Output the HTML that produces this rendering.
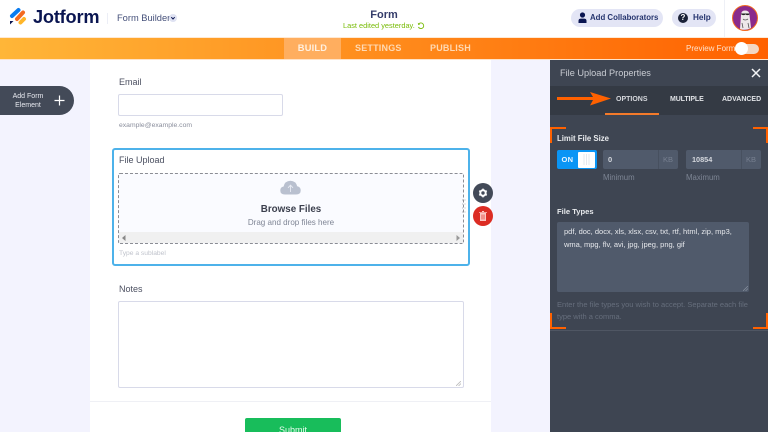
<!DOCTYPE html>
<html lang="en">
<head>
<meta charset="utf-8">
<title>Jotform Form Builder</title>
<style>
html,body{margin:0;padding:0;width:768px;height:432px;overflow:hidden;background:#f3f3fe;font-family:"Liberation Sans",sans-serif}
#r{position:relative;width:768px;height:432px;overflow:hidden;filter:blur(.35px)}
.a{position:absolute;white-space:nowrap;line-height:1}
.b{position:absolute;box-sizing:border-box}
svg{position:absolute;display:block}
</style>
</head>
<body>
<div id="r">
<!-- Header -->
<div class="b" style="left:0;top:0;width:768px;height:37px;background:#fff"></div>
<svg style="left:8px;top:7px" width="20" height="20" viewBox="0 0 20 20">
<path d="M4 9 L10.500 3" stroke="#0a7cf0" stroke-width="4" stroke-linecap="round"/>
<path d="M9 12 L15 5.500" stroke="#f36a21" stroke-width="4" stroke-linecap="round"/>
<path d="M12.500 15.500 L16 12" stroke="#ffb629" stroke-width="4" stroke-linecap="round"/>
<path d="M2 14 h3.500 l-3.500 3.500z" fill="#0a1551"/>
</svg>
<div class="a" style="left:33px;top:8px;font-size:18.200px;font-weight:700;color:#0a1551;letter-spacing:-.2px">Jotform</div>
<div class="b" style="left:107px;top:13px;width:1px;height:11px;background:#eceef6"></div>
<div class="a" style="left:117px;top:14px;font-size:9.300px;color:#45507a">Form Builder</div>
<div class="b" style="left:169px;top:14px;width:8px;height:8px;border-radius:50%;background:#dfe2f2"></div>
<svg style="left:169px;top:14px" width="8" height="8" viewBox="0 0 8 8"><path d="M2.300 3.200 L4 5 L5.700 3.200" fill="none" stroke="#0a1551" stroke-width="1"/></svg>
<div class="a" style="left:344px;top:10px;width:80px;text-align:center;font-size:11px;font-weight:700;color:#343c6a">Form</div>
<div class="a" style="left:343px;top:22px;font-size:7.400px;color:#78bb07">Last edited yesterday.</div>
<svg style="left:417px;top:22px" width="8" height="8" viewBox="0 0 8 8"><path d="M1.600 2.200 A2.800 2.800 0 1 1 1.400 5" fill="none" stroke="#78bb07" stroke-width=".9"/><path d="M.8 .8 L1.200 3 L3.200 2.400z" fill="#78bb07"/></svg>
<div class="b" style="left:571px;top:9px;width:92px;height:18px;border-radius:9px;background:#e3e5f5"></div>
<svg style="left:577px;top:12px" width="11" height="12" viewBox="0 0 11 12"><circle cx="5.500" cy="3" r="2.600" fill="#0a1551"/><path d="M1.500 11 V8.800 Q1.500 6.600 4 6.600 H7 Q9.500 6.600 9.500 8.800 V11z" fill="#0a1551"/></svg>
<div class="a" style="left:590px;top:14px;font-size:7.850px;font-weight:700;color:#26356f">Add Collaborators</div>
<div class="b" style="left:672px;top:9px;width:44px;height:18px;border-radius:9px;background:#e3e5f5"></div>
<div class="b" style="left:678px;top:13px;width:10px;height:10px;border-radius:50%;background:#1b2238;color:#fff;font-size:8px;font-weight:700;line-height:10px;text-align:center">?</div>
<div class="a" style="left:693px;top:14px;font-size:8.200px;font-weight:700;color:#26356f">Help</div>
<div class="b" style="left:724px;top:0;width:1px;height:37px;background:#eef0f6"></div>
<div class="b" style="left:732px;top:5px;width:26px;height:26px;border-radius:50%;background:#8a2a8c;border:1.500px solid #f26a21"></div>
<svg style="left:732px;top:5px" width="26" height="26" viewBox="0 0 26 26"><path d="M8 24 L9 10 Q9 5.500 13 5.500 Q17.500 5.500 17.500 10 L19 23 Q13 26 8 24z" fill="#efe9ea"/><path d="M9 9 H17.500 M10 9 a2 2 0 0 0 3 0 M14 9 a2 2 0 0 0 3 0" fill="none" stroke="#222" stroke-width="1"/><path d="M11 14 Q13 16 16 14 M10 18 L11 23 M16 18 L17 23" fill="none" stroke="#555" stroke-width=".8"/></svg>

<!-- Orange bar -->
<div class="b" style="left:0;top:37px;width:768px;height:23px;background:linear-gradient(90deg,#ffb638 0%,#ff6100 100%);border-top:1px solid #ffe9d3;border-bottom:1px solid #ffe3c8"></div>
<div class="b" style="left:284px;top:38px;width:57px;height:21px;background:#ffae5f"></div>
<div class="a" style="left:284px;top:44px;width:57px;text-align:center;font-size:9.300px;font-weight:700;color:#fff0e0;letter-spacing:.2px">BUILD</div>
<div class="a" style="left:355px;top:44px;font-size:9px;font-weight:700;color:#ffd9b3;letter-spacing:.2px">SETTINGS</div>
<div class="a" style="left:430px;top:44px;font-size:9px;font-weight:700;color:#ffd9b3;letter-spacing:.2px">PUBLISH</div>
<div class="a" style="left:686px;top:44.500px;font-size:8px;color:#ffe2cc">Preview Form</div>
<div class="b" style="left:735px;top:44px;width:24px;height:10px;border-radius:5px;background:#f3d8c4"></div>
<div class="b" style="left:735px;top:42px;width:13px;height:13px;border-radius:50%;background:#fff"></div>

<!-- Add form element -->
<div class="b" style="left:0;top:86px;width:74px;height:29px;background:#434a58;border-radius:0 15px 15px 0"></div>
<div class="a" style="left:5px;top:92px;width:46px;text-align:center;font-size:7px;line-height:9px;color:#e8eaf0;white-space:normal">Add Form<br>Element</div>
<svg style="left:54px;top:95px" width="11" height="11" viewBox="0 0 11 11"><path d="M5.500 .5 V10.500 M.5 5.500 H10.500" stroke="#fff" stroke-width="1.200"/></svg>

<!-- Form card -->
<div class="b" style="left:90px;top:60px;width:401px;height:372px;background:#fff"></div>
<div class="a" style="left:119px;top:77.500px;font-size:9px;color:#4c5061">Email</div>
<div class="b" style="left:118px;top:94px;width:165px;height:22px;border:1px solid #d8dae9;border-radius:2px;background:#fff"></div>
<div class="a" style="left:119px;top:123px;font-size:6.800px;color:#8a8e9c">example@example.com</div>

<!-- File upload -->
<div class="b" style="left:112px;top:148px;width:358px;height:118px;border:2px solid #4db2ea;border-radius:3px;background:#fff"></div>
<div class="a" style="left:119px;top:156px;font-size:9px;color:#4a4f60">File Upload</div>
<div class="b" style="left:118px;top:173px;width:346px;height:71px;border:1px dashed #8b8d94;border-radius:2px;background:#fafbff"></div>
<div class="b" style="left:119px;top:232px;width:344px;height:11px;background:#f0f0f0"></div>
<svg style="left:122px;top:235px" width="4" height="6" viewBox="0 0 4 6"><path d="M3.500 0 V6 L0 3z" fill="#888"/></svg>
<svg style="left:456px;top:235px" width="4" height="6" viewBox="0 0 4 6"><path d="M.5 0 V6 L4 3z" fill="#999"/></svg>
<svg style="left:280px;top:180px" width="21" height="15" viewBox="0 0 21 15"><path d="M5 14.500 Q.3 14.500 .3 10.500 Q.3 7 3.600 6.500 Q4.500 1 10.500 .7 Q16 1 17.200 6.300 Q20.700 7 20.700 10.500 Q20.700 14.500 16 14.500z" fill="#b9c0cf"/><path d="M10.500 12 V5.500 M8 7.800 L10.500 5.200 L13 7.800" fill="none" stroke="#e9ecf4" stroke-width=".9"/></svg>
<svg style="left:461px;top:199px" width="5" height="14" viewBox="0 0 5 14"><path d="M1 1 H2 M3.500 1 H4.500 M1 5 H2 M3.500 5 H4.500 M1 9 H2 M3.500 9 H4.500 M1 13 H2 M3.500 13 H4.500" stroke="#b5b7bd" stroke-width="1"/></svg>
<div class="a" style="left:242px;top:204.500px;width:98px;text-align:center;font-size:9.800px;font-weight:700;color:#3b3f4d">Browse Files</div>
<div class="a" style="left:242px;top:218.500px;width:98px;text-align:center;font-size:8.050px;color:#7f8595">Drag and drop files here</div>
<div class="a" style="left:119px;top:251px;font-size:6.700px;color:#c0c3cc">Type a sublabel</div>
<div class="b" style="left:473px;top:183px;width:20px;height:20px;border-radius:50%;background:#434a58"></div>
<svg style="left:478px;top:188px" width="10" height="10" viewBox="0 0 10 10"><circle cx="5" cy="5" r="2.700" fill="none" stroke="#fff" stroke-width="2"/><path d="M5 .6 V2 M5 8 V9.400 M1.200 2.800 L2.400 3.500 M7.600 6.500 L8.800 7.200 M1.200 7.200 L2.400 6.500 M7.600 3.500 L8.800 2.800" stroke="#fff" stroke-width="1.500"/></svg>
<div class="b" style="left:473px;top:206px;width:20px;height:20px;border-radius:50%;background:#dc2c23"></div>
<svg style="left:479px;top:211px" width="8" height="10" viewBox="0 0 8 10"><path d="M1 2 H7 V10 H1z M0 1 H8 V1.800 H0z M3 0 H5 V1 H3z" fill="#fbc6c2"/><path d="M3 3.500 V8.500 M5 3.500 V8.500" stroke="#dc2c23" stroke-width=".7"/></svg>

<!-- Notes -->
<div class="a" style="left:119px;top:284.500px;font-size:9px;color:#4c5061">Notes</div>
<div class="b" style="left:118px;top:301px;width:346px;height:87px;border:1px solid #d8dae9;border-radius:2px;background:#fff"></div>
<svg style="left:456px;top:381px" width="5" height="5" viewBox="0 0 5 5"><path d="M0 5 L5 0 M2.500 5 L5 2.500" stroke="#bbb" stroke-width=".8"/></svg>
<div class="b" style="left:90px;top:401px;width:401px;height:1px;background:#eff0f5"></div>
<div class="b" style="left:245px;top:418px;width:96px;height:20px;border-radius:2px;background:#18bd5b"></div>
<div class="a" style="left:245px;top:425.500px;width:96px;text-align:center;font-size:9px;color:#eafbef">Submit</div>

<!-- Right panel -->
<div class="b" style="left:550px;top:60px;width:218px;height:372px;background:#3e4552"></div>
<div class="a" style="left:560px;top:69px;font-size:9.200px;color:#c9ccd3">File Upload Properties</div>
<svg style="left:751px;top:68px" width="10" height="10" viewBox="0 0 10 10"><path d="M1 1 L9 9 M9 1 L1 9" stroke="#f3f4f6" stroke-width="1.500"/></svg>
<div class="b" style="left:550px;top:86px;width:218px;height:29px;background:#343a44"></div>
<div class="a" style="left:616px;top:95.500px;font-size:7px;font-weight:700;color:#d5d7dc">OPTIONS</div>
<div class="a" style="left:670px;top:95.500px;font-size:7px;font-weight:700;letter-spacing:-.1px;color:#e0e2e6">MULTIPLE</div>
<div class="a" style="left:722px;top:95.500px;font-size:7px;font-weight:700;color:#e0e2e6">ADVANCED</div>
<div class="b" style="left:605px;top:113px;width:54px;height:2px;background:#f47a2a"></div>
<svg style="left:556px;top:90px" width="56" height="17" viewBox="0 0 56 17"><path d="M1 7 H37 L34 2 L55 8.500 L34 15.500 L37 10 H1z" fill="#ff6100"/></svg>

<!-- Corners -->
<svg style="left:550px;top:127px" width="218" height="202" viewBox="0 0 218 202">
<path d="M1 16 V1 H16 M203 1 H217 V16 M1 186 V201 H16 M203 201 H217 V186" fill="none" stroke="#ff6100" stroke-width="2"/>
</svg>

<div class="a" style="left:557px;top:134.500px;font-size:7.800px;font-weight:700;color:#e9ebee">Limit File Size</div>
<!-- Toggle -->
<div class="b" style="left:557px;top:150px;width:40px;height:19px;border-radius:2px;background:#0a95f5"></div>
<div class="a" style="left:561.500px;top:156px;font-size:7.500px;font-weight:700;color:#e8f5ff;letter-spacing:.3px">ON</div>
<div class="b" style="left:578px;top:151.500px;width:17px;height:16px;background:#fff;border-radius:1px"></div>
<svg style="left:583px;top:154px" width="7" height="11" viewBox="0 0 7 11"><path d="M1 0 V11 M3.500 0 V11 M6 0 V11" stroke="#dfe3ea" stroke-width=".8"/></svg>
<!-- Min -->
<div class="b" style="left:603px;top:150px;width:75px;height:19px;border-radius:2px;background:#505a6b"></div>
<div class="b" style="left:658px;top:150px;width:1px;height:19px;background:#47505f"></div>
<div class="a" style="left:608px;top:156px;font-size:7.500px;font-weight:700;color:#d5d8de">0</div>
<div class="a" style="left:663px;top:156px;font-size:7.500px;color:#778090">KB</div>
<div class="a" style="left:603px;top:173.500px;font-size:7.800px;color:#7d8594">Minimum</div>
<!-- Max -->
<div class="b" style="left:686px;top:150px;width:75px;height:19px;border-radius:2px;background:#505a6b"></div>
<div class="b" style="left:741px;top:150px;width:1px;height:19px;background:#47505f"></div>
<div class="a" style="left:692px;top:156px;font-size:7.300px;font-weight:700;color:#d5d8de">10854</div>
<div class="a" style="left:746px;top:156px;font-size:7.500px;color:#778090">KB</div>
<div class="a" style="left:686px;top:173.500px;font-size:7.800px;color:#7d8594">Maximum</div>

<div class="a" style="left:557px;top:207.500px;font-size:7.600px;font-weight:700;color:#e9ebee">File Types</div>
<div class="b" style="left:557px;top:222px;width:192px;height:70px;border-radius:2px;background:#505a6b"></div>
<div class="a" style="left:564px;top:226px;font-size:7.500px;line-height:12.600px;color:#e6e8ec">pdf, doc, docx, xls, xlsx, csv, txt, rtf, html, zip, mp3,<br>wma, mpg, flv, avi, jpg, jpeg, png, gif</div>
<svg style="left:743px;top:286px" width="5" height="5" viewBox="0 0 5 5"><path d="M0 5 L5 0 M2.500 5 L5 2.500" stroke="#8a92a0" stroke-width=".7"/></svg>
<div class="a" style="left:557px;top:299px;font-size:7.530px;line-height:12px;color:#666e7c">Enter the file types you wish to accept. Separate each file<br>type with a comma.</div>
<div class="b" style="left:550px;top:330px;width:218px;height:1px;background:#4f5663"></div>
</div>
</body>
</html>
